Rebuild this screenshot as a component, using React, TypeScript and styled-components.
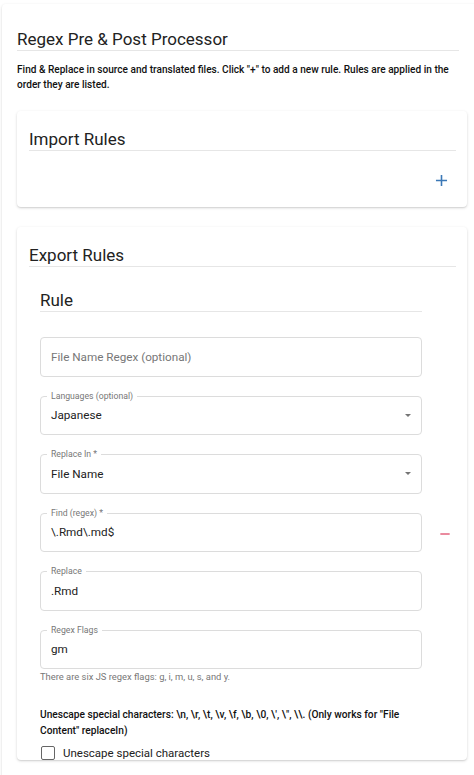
import styled, { createGlobalStyle } from "styled-components";

const GlobalStyle = createGlobalStyle`
  html, body {
    margin: 0;
    padding: 0;
    background: #fff;
    overflow: hidden;
  }
  body {
    font-family: Roboto, "Liberation Sans", Arial, sans-serif;
    color: rgba(0, 0, 0, 0.87);
  }
`;

const Page = styled.div`
  padding: 4px 0 0 2px;
`;

const Paper = styled.section`
  background: #fff;
  border-radius: 4px;
  box-shadow: 0 1px 3px rgba(0, 0, 0, 0.16), 0 1px 1px rgba(0, 0, 0, 0.06);
`;

const OuterCard = styled(Paper)`
  margin-right: -10px;
  padding: 25px 16px 0 15px;
  height: 800px;
`;

const InnerCard = styled(Paper)`
  width: 450px;
  padding: 18px 11px 0 12px;
  box-sizing: border-box;
  margin-bottom: 20px;
`;

const Heading = styled.h2<{ $trim?: number }>`
  margin: 0 ${({ $trim }) => $trim ?? 0}px 0 0;
  font-size: 17px;
  line-height: 21px;
  font-weight: 400;
  color: #222;
  border-bottom: 1px solid #e6e6e6;
`;

const Description = styled.p`
  margin: 11px 0 19px;
  font-size: 10.1px;
  line-height: 15px;
  font-weight: 500;
  color: #111;
`;

const AddRow = styled.div`
  display: flex;
  justify-content: flex-end;
  padding: 17px 3px 15px 0;
`;

const IconButton = styled.button<{ $color: string }>`
  width: 24px;
  height: 24px;
  padding: 0;
  border: 0;
  background: none;
  display: flex;
  align-items: center;
  justify-content: center;
  color: ${({ $color }) => $color};
`;

const RuleSection = styled.div`
  margin-top: 23px;
  padding-left: 11px;
`;

const RuleHeading = styled(Heading)`
  margin-right: 34px;
  margin-bottom: 25px;
`;

const Row = styled.div`
  display: flex;
  align-items: center;
  margin-bottom: 19px;
`;

const Action = styled.div`
  width: 34px;
  display: flex;
  justify-content: center;
  padding: 4px 0 0 12px;
  box-sizing: border-box;
`;

const Field = styled.div`
  position: relative;
  flex: 1;
  height: 39.5px;
  box-sizing: border-box;
  border: 1px solid #dcdcdc;
  border-radius: 4px;
  display: flex;
  align-items: center;
  padding: 0 10px;
`;

const Label = styled.span`
  position: absolute;
  top: -7px;
  left: 6px;
  padding: 0 4px;
  background: #fff;
  font-size: 8.7px;
  line-height: 12px;
  color: #777;
`;

const Value = styled.span<{ $placeholder?: boolean }>`
  flex: 1;
  font-size: 11.7px;
  line-height: 16px;
  color: ${({ $placeholder }) => ($placeholder ? "#777" : "#222")};
`;

const Caret = styled.span`
  width: 0;
  height: 0;
  border-left: 3.5px solid transparent;
  border-right: 3.5px solid transparent;
  border-top: 3.5px solid #757575;
`;

const FieldBlock = styled.div`
  margin-bottom: 24px;
`;

const FlagsRow = styled(Row)`
  margin-bottom: 2px;
`;

const Helper = styled.div`
  font-size: 9.4px;
  line-height: 12px;
  color: #777;
`;

const Note = styled.p`
  margin: 0 34px 7px 0;
  font-size: 10.2px;
  line-height: 16px;
  font-weight: 500;
  color: #111;
`;

const CheckRow = styled.label`
  display: flex;
  align-items: center;
  gap: 8px;
  padding-left: 1px;
  font-size: 11.5px;
  color: #222;
`;

const Box = styled.span`
  width: 14px;
  height: 14px;
  box-sizing: border-box;
  border: 1.5px solid #666;
  border-radius: 2px;
`;

const PlusIcon = () => (
  <svg width="19" height="19" viewBox="0 0 24 24" fill="currentColor">
    <path d="M19 13h-6v6h-2v-6H5v-2h6V5h2v6h6v2z" />
  </svg>
);

const MinusIcon = () => (
  <svg width="16" height="16" viewBox="0 0 24 24" fill="currentColor">
    <path d="M19 13H5v-2h14v2z" />
  </svg>
);

type FieldDef = {
  label?: string;
  value: string;
  select?: boolean;
  removable?: boolean;
};

const fields: FieldDef[] = [
  { value: "File Name Regex (optional)" },
  { label: "Languages (optional)", value: "Japanese", select: true },
  { label: "Replace In *", value: "File Name", select: true },
  { label: "Find (regex) *", value: "\\.Rmd\\.md$", removable: true },
  { label: "Replace", value: ".Rmd" },
];

function TextField({ label, value, select }: FieldDef) {
  return (
    <Field>
      {label && <Label>{label}</Label>}
      <Value $placeholder={!label}>{value}</Value>
      {select && <Caret />}
    </Field>
  );
}

function App() {
  return (
    <Page>
      <GlobalStyle />
      <OuterCard>
        <Heading $trim={9}>Regex Pre &amp; Post Processor</Heading>
        <Description>
          Find &amp; Replace in source and translated files. Click "+" to add a
          new rule. Rules are applied in the order they are listed.
        </Description>

        <InnerCard>
          <Heading>Import Rules</Heading>
          <AddRow>
            <IconButton $color="#3b78b6" aria-label="add">
              <PlusIcon />
            </IconButton>
          </AddRow>
        </InnerCard>

        <InnerCard>
          <Heading>Export Rules</Heading>
          <RuleSection>
            <RuleHeading>Rule</RuleHeading>
            {fields.map((f) => (
              <Row key={f.value}>
                <TextField {...f} />
                <Action>
                  {f.removable && (
                    <IconButton $color="#e0506e" aria-label="remove">
                      <MinusIcon />
                    </IconButton>
                  )}
                </Action>
              </Row>
            ))}
            <FieldBlock>
              <FlagsRow>
                <TextField label="Regex Flags" value="gm" />
                <Action />
              </FlagsRow>
              <Helper>There are six JS regex flags: g, i, m, u, s, and y.</Helper>
            </FieldBlock>
            <Note>
              Unescape special characters: \n, \r, \t, \v, \f, \b, \0, \', \",
              \\. (Only works for "File Content" replaceIn)
            </Note>
            <CheckRow>
              <Box />
              Unescape special characters
            </CheckRow>
          </RuleSection>
        </InnerCard>
      </OuterCard>
    </Page>
  );
}

export default App;
